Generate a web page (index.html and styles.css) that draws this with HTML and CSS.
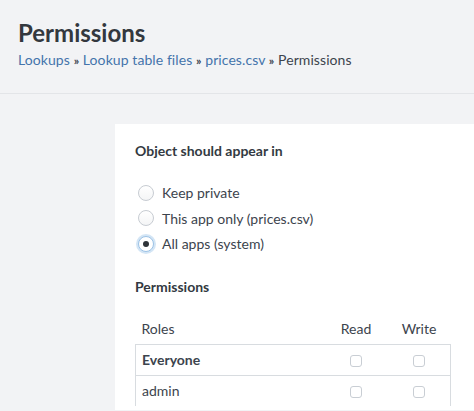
FILE: index.html
```html
<!DOCTYPE html>
<html>
<head>
<meta charset="utf-8">
<link rel="stylesheet" href="styles.css">
</head>
<body>
<header class="page-header">
  <h1 class="title">Permissions</h1>
  <nav class="crumbs">
    <a href="#">Lookups</a> <span class="sep">»</span> <a href="#">Lookup table files</a> <span class="sep">»</span> <a href="#">prices.csv</a> <span class="sep">»</span> <span class="current">Permissions</span>
  </nav>
</header>
<main class="panel">
  <h2 class="section">Object should appear in</h2>
  <ul class="radios">
    <li class="radio-row"><span class="radio"></span><span>Keep private</span></li>
    <li class="radio-row"><span class="radio"></span><span>This app only (prices.csv)</span></li>
    <li class="radio-row"><span class="radio checked"></span><span>All apps (system)</span></li>
  </ul>
  <h2 class="section perms">Permissions</h2>
  <table class="perm-table">
    <thead>
      <tr><th class="role-col">Roles</th><th class="chk-col">Read</th><th class="chk-col">Write</th></tr>
    </thead>
    <tbody>
      <tr><td class="role strong">Everyone</td><td class="chk"><span class="box"></span></td><td class="chk"><span class="box"></span></td></tr>
      <tr><td class="role">admin</td><td class="chk"><span class="box"></span></td><td class="chk"><span class="box"></span></td></tr>
    </tbody>
  </table>
</main>
</body>
</html>
```

FILE: styles.css
```css
html, body {
  margin: 0;
  padding: 0;
  height: 100%;
  overflow: hidden;
}
body {
  background: #f2f3f5;
  font-family: Lato, "Open Sans", sans-serif;
  color: #3c444d;
}
.page-header {
  padding: 19px 18px 22px;
  border-bottom: 1px solid #e3e5e8;
}
.title {
  margin: 0;
  font-size: 24px;
  line-height: 28px;
  font-weight: 700;
  color: #33383e;
}
.crumbs {
  margin-top: 3px;
  font-size: 14px;
  line-height: 20px;
  letter-spacing: 0.08px;
  color: #3c444d;
}
.crumbs a {
  color: #4474ab;
  text-decoration: none;
}
.crumbs .sep {
  font-size: 12px;
  font-weight: 700;
  color: #3c444d;
}
.panel {
  margin: 30px 0 0 115px;
  background: #fff;
  padding: 17px 0 4px 20px;
}
.section {
  margin: 0;
  font-size: 14px;
  line-height: 20px;
  font-weight: 700;
  color: #333a42;
}
.radios {
  list-style: none;
  margin: 19px 0 0;
  padding: 0;
}
.radio-row {
  display: flex;
  align-items: center;
  height: 25.5px;
  font-size: 14px;
  gap: 8px;
  padding-left: 3px;
}
.radio {
  width: 16px;
  height: 16px;
  border: 1px solid #c7ccd2;
  border-radius: 50%;
  background: linear-gradient(#ffffff, #f4f5f6);
  box-sizing: border-box;
  position: relative;
  flex: none;
}
.radio.checked {
  border-color: #9cc2e6;
  background: #fff;
  box-shadow: 0 0 0 2px #d3e5f5;
}
.radio.checked::after {
  content: "";
  position: absolute;
  left: 4px;
  top: 4px;
  width: 6px;
  height: 6px;
  border-radius: 50%;
  background: #2e3338;
}
.perms {
  margin-top: 20px;
}
.perm-table {
  margin-top: 17px;
  width: 316px;
  border-collapse: collapse;
  font-size: 14px;
}
.perm-table th {
  height: 30px;
  padding: 0;
  font-weight: 400;
  color: #3c444d;
}
.perm-table .role-col {
  text-align: left;
  padding-left: 6px;
}
.perm-table .chk-col {
  width: 63px;
  text-align: center;
}
.perm-table td {
  height: 30px;
  padding: 0;
  border-top: 1px solid #d8dce0;
}
.perm-table td:first-child {
  border-left: 1px solid #d8dce0;
}
.perm-table td:last-child {
  border-right: 1px solid #d8dce0;
}
.role {
  padding-left: 6px !important;
}
.strong {
  font-weight: 700;
}
.chk {
  text-align: center;
}
.box {
  display: inline-block;
  width: 12px;
  height: 12px;
  border: 1px solid #c9ced4;
  border-radius: 3px;
  box-sizing: border-box;
  vertical-align: middle;
}
```
